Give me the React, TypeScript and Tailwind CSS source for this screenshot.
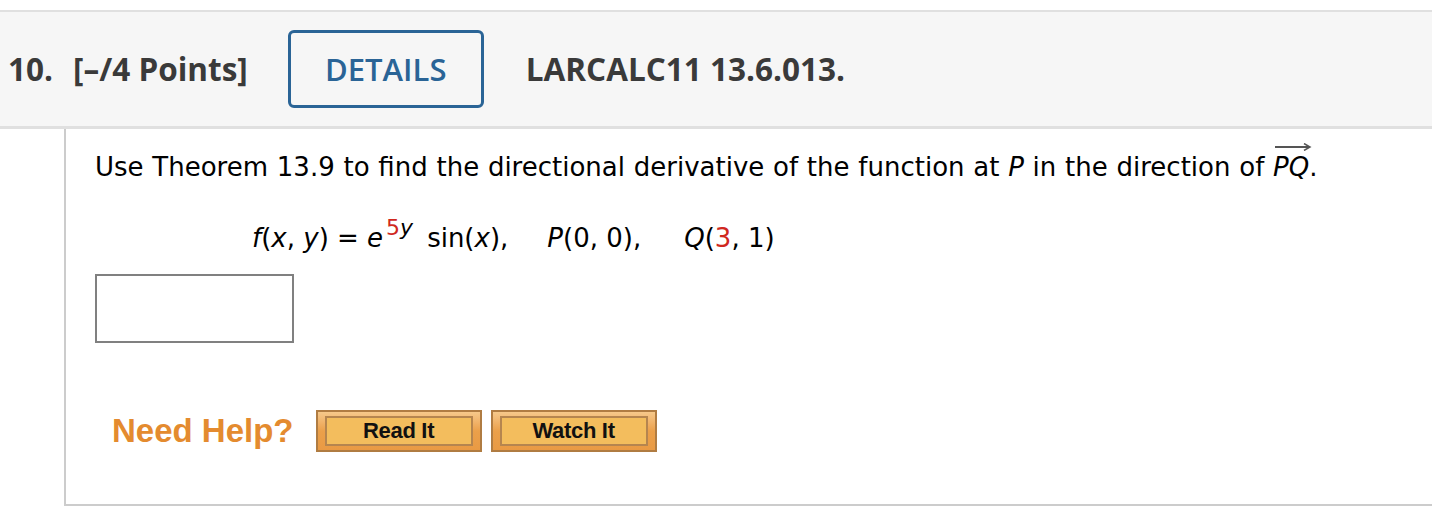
export default function App() {
  return (
    <div className="min-h-screen bg-white pt-[10px]">
      <div className="flex h-[119px] items-center border-t-2 border-b-[3px] border-[#e0e0e0] bg-[#f6f6f6] pl-[8px] font-['Open_Sans',sans-serif] text-[31.5px] font-bold text-[#3a3a3a]">
        <span>10.</span>
        <span className="ml-[20px]">[–/4 Points]</span>
        <button className="ml-[40px] flex h-[78px] w-[196px] items-center justify-center rounded-[6px] border-[3px] border-[#2a6496] text-[31px] font-semibold text-[#2a6496]">
          DETAILS
        </button>
        <span className="ml-[42px]">LARCALC11 13.6.013.</span>
      </div>

      <div className="ml-[64px] h-[377px] border-b-2 border-l-2 border-[#cccccc] pl-[29px] pt-[23px] font-['DejaVu_Sans',sans-serif] text-[26px] leading-[30px] text-black">
        <p className="[word-spacing:0.5px]">
          Use Theorem 13.9 to find the directional derivative of the function at <i>P</i> in the
          direction of{" "}
          <span className="relative">
            <i>PQ</i>
            <svg
              className="absolute left-[2px] top-[-9px]"
              width="37"
              height="8"
              viewBox="0 0 37 8"
            >
              <line x1="0" y1="4" x2="34" y2="4" stroke="#555" strokeWidth="2" />
              <path d="M29 0.5 L35 4 L29 7.5" fill="none" stroke="#555" strokeWidth="1.5" />
            </svg>
          </span>
          .
        </p>

        <p className="mt-[35px] ml-[157px] h-[30px] whitespace-nowrap">
          <i>f</i>(<i>x</i>, <i>y</i>) = <i>e</i>
          <span className="ml-[3px] inline-block align-[12px] text-[22px] leading-none">
            <span className="text-[#d0281e]">5</span>
            <i>y</i>
          </span>
          <span className="ml-[14px]">
            sin(<i>x</i>),
          </span>
          <span className="ml-[39px]">
            <i>P</i>(0, 0),
          </span>
          <span className="ml-[43px]">
            <i>Q</i>(<span className="text-[#d0281e]">3</span>, 1)
          </span>
        </p>

        <div className="mt-[27px] h-[69px] w-[199px] border-2 border-[#808080] bg-white" />

        <div className="mt-[67px] flex items-center">
          <span className="ml-[17px] font-['Liberation_Sans',sans-serif] text-[33px] font-bold text-[#e48b2f]">
            Need Help?
          </span>
          <HelpButton className="ml-[22px]" label="Read It" />
          <HelpButton className="ml-[9px]" label="Watch It" />
        </div>
      </div>
    </div>
  );
}

function HelpButton({ label, className }: { label: string; className?: string }) {
  return (
    <button
      className={`${className} flex h-[42px] w-[166px] items-stretch border-2 border-[#b07c42] bg-gradient-to-b from-[#f6c88a] via-[#eba04a] to-[#e99a44] px-[7px] py-[4px]`}
    >
      <span className="flex flex-1 items-center justify-center border-2 border-[#b5854f] bg-[#f3bd5d] font-['Liberation_Sans',sans-serif] text-[22px] font-bold leading-none tracking-[-0.3px] text-[#111]">
        {label}
      </span>
    </button>
  );
}
